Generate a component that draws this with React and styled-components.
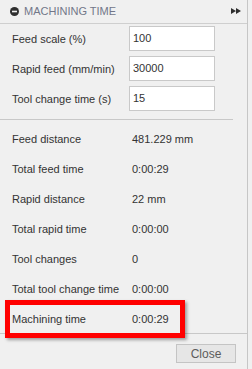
import React from 'react';
import styled, { createGlobalStyle } from 'styled-components';

// Page reset
const GlobalStyle = createGlobalStyle`
  html, body {
    margin: 0;
    padding: 0;
    background: #f0f0f0;
  }
  * {
    box-sizing: border-box;
  }
`;

const Panel = styled.div`
  display: flex;
  flex-direction: column;
  width: 248px;
  height: 369px;
  background: #f0f0f0;
  border-right: 1px solid #c6c6c6;
  font-family: "Liberation Sans", Arial, sans-serif;
  font-size: 11px;
  color: #333;
`;

const Header = styled.div`
  display: flex;
  align-items: center;
  height: 24px;
  padding: 0 6px 1px 10px;
  border-bottom: 1px solid #cfcfcf;
  gap: 5px;
`;

const Title = styled.span`
  flex: 1;
  font-size: 11px;
  color: #727789;
`;

const Form = styled.div`
  display: grid;
  grid-template-columns: 117px 86px;
  row-gap: 5px;
  align-items: center;
  padding: 2px 0 8px 12px;
  margin-right: 14px;
  border-bottom: 1px solid #c8c8c8;
`;

const Label = styled.span`
  white-space: nowrap;
`;

const Input = styled.input`
  height: 25px;
  width: 86px;
  margin: 0;
  padding: 0 0 2px 3px;
  border: 1px solid #c9c9c9;
  background: #fff;
  font-family: inherit;
  font-size: 11px;
  color: #333;
  outline: none;
`;

const Info = styled.div`
  display: flex;
  flex-direction: column;
  height: 214px;
  padding-top: 4px;
  border-bottom: 1px solid #c8c8c8;
`;

const Row = styled.div`
  position: relative;
  display: grid;
  grid-template-columns: 120px auto;
  align-items: center;
  flex: none;
  height: 30px;
  padding-left: 12px;

  ${(props) =>
    props.highlight &&
    `
    &::after {
      content: "";
      position: absolute;
      left: 5px;
      top: -4px;
      width: 170px;
      height: 28px;
      border: 5px solid #ff0000;
      box-shadow: 2px 2px 3px rgba(0, 0, 0, 0.35);
      pointer-events: none;
    }
  `}
`;

const Footer = styled.div`
  flex: 1;
  display: flex;
  justify-content: flex-end;
  align-items: flex-start;
  padding: 10px 11px 0 0;
`;

const CloseButton = styled.button`
  width: 60px;
  height: 19px;
  padding: 0;
  border: 1px solid #c4c4c4;
  background: #e6e6e6;
  font-family: "Liberation Sans", Arial, sans-serif;
  font-size: 12px;
  color: #5c5c5c;
`;

const CollapseIcon = () => (
  <svg width="9" height="9" viewBox="0 0 9 9">
    <circle cx="4.5" cy="4.5" r="4.5" fill="#2f2f2f" />
    <rect x="2" y="3.7" width="5" height="1.6" fill="#f0f0f0" />
  </svg>
);

const ExpandIcon = () => (
  <svg width="10" height="6" viewBox="0 0 10 6">
    <path d="M0 0 L5 3 L0 6 Z M5 0 L10 3 L5 6 Z" fill="#2f2f2f" />
  </svg>
);

const inputs = [
  { label: 'Feed scale (%)', value: '100' },
  { label: 'Rapid feed (mm/min)', value: '30000' },
  { label: 'Tool change time (s)', value: '15' },
];

const results = [
  { label: 'Feed distance', value: '481.229 mm' },
  { label: 'Total feed time', value: '0:00:29' },
  { label: 'Rapid distance', value: '22 mm' },
  { label: 'Total rapid time', value: '0:00:00' },
  { label: 'Tool changes', value: '0' },
  { label: 'Total tool change time', value: '0:00:00' },
  { label: 'Machining time', value: '0:00:29', highlight: true },
];

const App = () => (
  <Panel>
    <GlobalStyle />
    <Header>
      <CollapseIcon />
      <Title>MACHINING TIME</Title>
      <ExpandIcon />
    </Header>
    <Form>
      {inputs.map((item) => (
        <React.Fragment key={item.label}>
          <Label>{item.label}</Label>
          <Input defaultValue={item.value} />
        </React.Fragment>
      ))}
    </Form>
    <Info>
      {results.map((item) => (
        <Row key={item.label} highlight={item.highlight}>
          <Label>{item.label}</Label>
          <span>{item.value}</span>
        </Row>
      ))}
    </Info>
    <Footer>
      <CloseButton>Close</CloseButton>
    </Footer>
  </Panel>
);

export default App;
